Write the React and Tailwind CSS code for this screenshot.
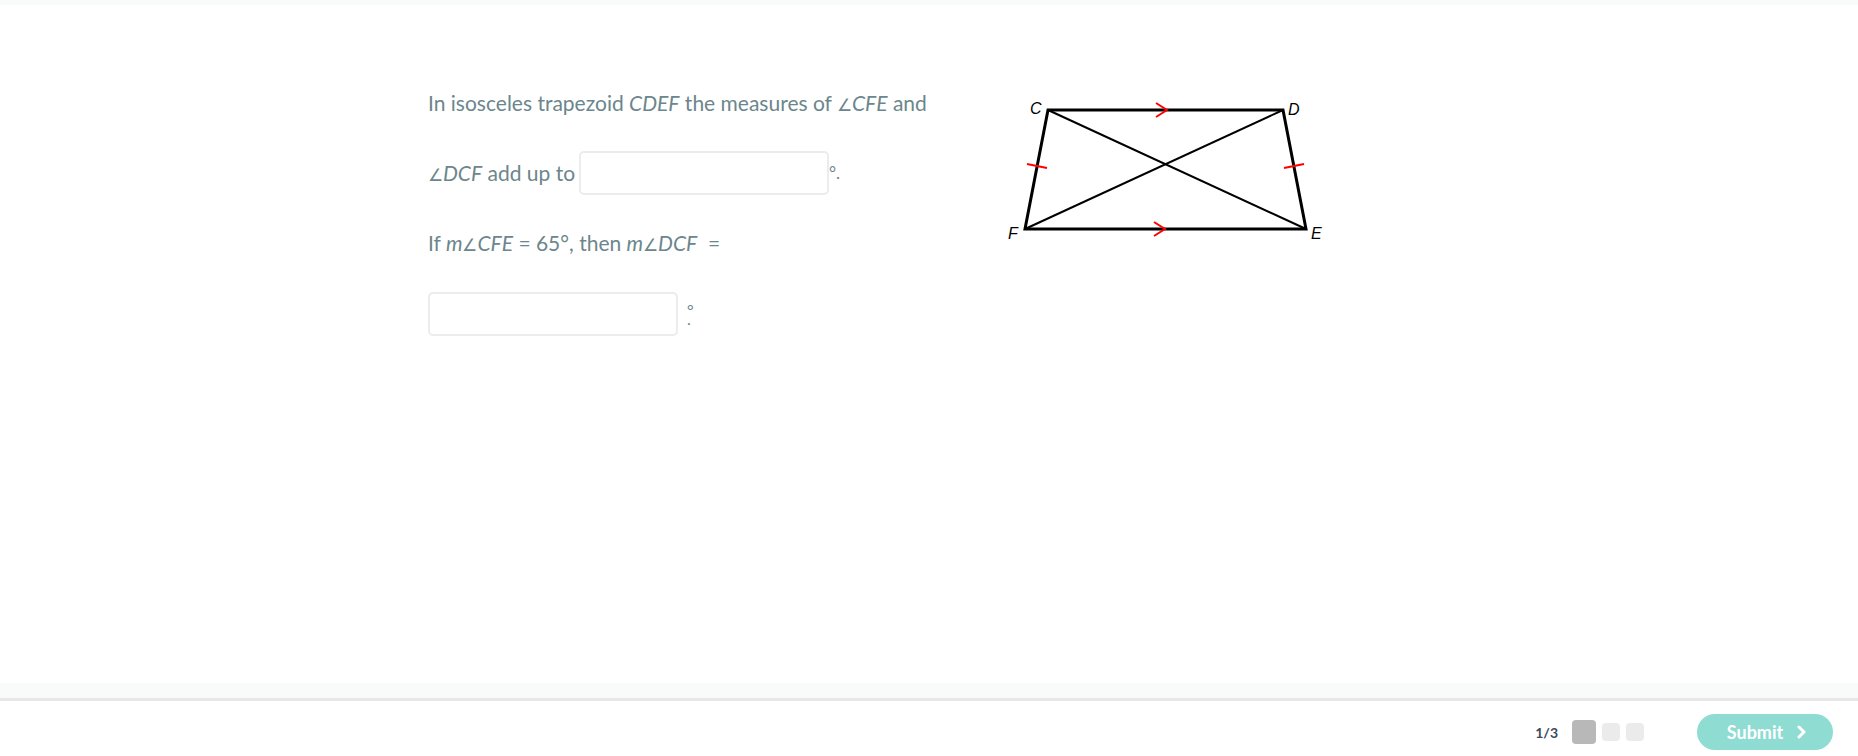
import React from 'react';

const textColor = 'text-[#6b868c]';

function Angle() {
  return <span className="text-[17px]">∠</span>;
}

function Trapezoid() {
  return (
    <svg width="340" height="170" viewBox="0 0 340 170" className="block">
      {/* diagonals */}
      <line x1="48" y1="30" x2="306" y2="149" stroke="#000" strokeWidth="2" />
      <line x1="283" y1="30" x2="25" y2="149" stroke="#000" strokeWidth="2" />
      {/* sides */}
      <polygon
        points="48,30 283,30 306,149 25,149"
        fill="none"
        stroke="#000"
        strokeWidth="3"
        strokeLinejoin="miter"
      />
      {/* parallel marks */}
      <polyline points="156,23 167,30 156,37" fill="none" stroke="#f00" strokeWidth="2" />
      <polyline points="154,142 165,149 154,156" fill="none" stroke="#f00" strokeWidth="2" />
      {/* congruent ticks */}
      <line x1="27" y1="84" x2="47" y2="88" stroke="#f00" strokeWidth="2" />
      <line x1="284" y1="88" x2="304" y2="84" stroke="#f00" strokeWidth="2" />
      {/* labels */}
      <g fontFamily="'Liberation Sans', Arial, sans-serif" fontStyle="italic" fontSize="16" fill="#000">
        <text x="30" y="34">C</text>
        <text x="288" y="35">D</text>
        <text x="8" y="159">F</text>
        <text x="311" y="159">E</text>
      </g>
    </svg>
  );
}

function Blank({ className = '' }) {
  return (
    <input
      type="text"
      className={`h-[44px] w-[250px] rounded-[5px] border-2 border-[#ececec] bg-white outline-none ${className}`}
    />
  );
}

export default function App() {
  return (
    <div className="flex h-[756px] w-full flex-col bg-[#f9fbfb] font-['Lato','Open_Sans',sans-serif]">
      {/* Question area */}
      <div className="mt-[5px] h-[678px] bg-white">
        <div className={`mx-auto flex w-[1002px] pt-[62px] text-[21px] ${textColor}`}>
          <div className="w-[572px] shrink-0">
            <div className="flex h-[72px] items-center whitespace-nowrap">
              <span>
                In isosceles trapezoid <i>CDEF</i> the measures of <Angle /><i>CFE</i> and
              </span>
            </div>
            <div className="flex h-[68px] items-center whitespace-nowrap">
              <span>
                <Angle /><i>DCF</i> add up to
              </span>
              <Blank className="ml-[4px]" />
              <span className="text-[17px]">°.</span>
            </div>
            <div className="flex h-[72px] items-center whitespace-nowrap">
              <span>
                If <i>m</i><Angle /><i>CFE</i> = 65°, then <i>m</i><Angle /><i>DCF</i>&nbsp; =
              </span>
            </div>
            <div className="mt-[12px] flex h-[45px] items-center">
              <Blank />
              <span className="ml-[9px] flex flex-col text-[16px] leading-[9px]">
                <span>°</span>
                <span>.</span>
              </span>
            </div>
          </div>
          <div className="mt-[13px]">
            <Trapezoid />
          </div>
        </div>
      </div>

      <div className="flex-1" />
      <div className="h-[3px] bg-[#e8e8e8]" />

      {/* Footer */}
      <div className="flex h-[55px] items-center justify-end bg-white pr-[25px] pt-[7px]">
        <span className="mr-[14px] text-[14px] font-bold text-[#3b4a5c]">1/3</span>
        <div className="flex items-center gap-[6px]">
          <div className="h-[24px] w-[24px] rounded-[4px] bg-[#b8b8b8]" />
          <div className="h-[18px] w-[18px] rounded-[4px] bg-[#ebebeb]" />
          <div className="h-[18px] w-[18px] rounded-[4px] bg-[#ebebeb]" />
        </div>
        <button className="ml-[53px] flex h-[36px] w-[136px] items-center justify-center gap-[14px] rounded-full bg-[#8fdcd3] pl-[4px] text-[18px] font-bold text-white">
          <span>Submit</span>
          <svg width="10" height="14" viewBox="0 0 10 14">
            <polyline points="2,2 7,7 2,12" fill="none" stroke="#fff" strokeWidth="3" strokeLinecap="round" strokeLinejoin="round" />
          </svg>
        </button>
      </div>
    </div>
  );
}
